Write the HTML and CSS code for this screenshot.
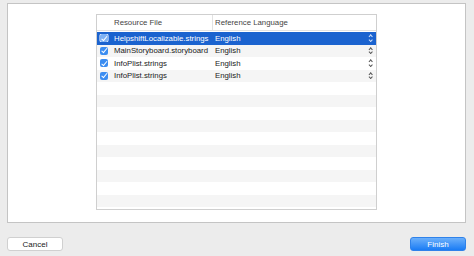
FILE: index.html
```html
<!DOCTYPE html>
<html lang="en">
<head>
  <meta charset="UTF-8">
  <title>Localization</title>
  <link rel="stylesheet" href="styles.css">
</head>
<body>
<div class="sheet">
  <div class="panel">
    <div class="files">
      <div class="files_head">
        <div class="cell"></div>
        <div class="cell">Resource File</div>
        <div class="cell col_lang">Reference Language</div>
      </div>
      <div class="files_body">
        <div class="row selected">
          <div class="cell"><span class="check"></span></div>
          <div class="cell">HelpshiftLocalizable.strings</div>
          <div class="cell col_lang">English<span class="updown"></span></div>
        </div>
        <div class="row">
          <div class="cell"><span class="check"></span></div>
          <div class="cell">MainStoryboard.storyboard</div>
          <div class="cell col_lang">English<span class="updown"></span></div>
        </div>
        <div class="row">
          <div class="cell"><span class="check"></span></div>
          <div class="cell">InfoPlist.strings</div>
          <div class="cell col_lang">English<span class="updown"></span></div>
        </div>
        <div class="row">
          <div class="cell"><span class="check"></span></div>
          <div class="cell">InfoPlist.strings</div>
          <div class="cell col_lang">English<span class="updown"></span></div>
        </div>
        <div class="row"></div>
        <div class="row"></div>
        <div class="row"></div>
        <div class="row"></div>
        <div class="row"></div>
        <div class="row"></div>
        <div class="row"></div>
        <div class="row"></div>
        <div class="row"></div>
        <div class="row"></div>
        <div class="row"></div>
      </div>
    </div>
  </div>
  <div class="actions">
    <button class="btn">Cancel</button>
    <button class="btn btn_default">Finish</button>
  </div>
</div>
</body>
</html>
```

FILE: styles.css
```css
body {
  margin: 0;
  background: #ececec;
  font-family: 'Liberation Sans', Arial, sans-serif;
  font-size: 7.8px;
  color: #222;
}

.sheet {
  width: 474px;
  height: 256px;
  box-sizing: border-box;
  padding: 3px 8px 0 7px;
}

.panel {
  height: 220px;
  box-sizing: border-box;
  background: #fff;
  border: 1px solid #c4c4c4;
  padding-top: 10px;
  padding-left: 88px;
}

.files {
  width: 281px;
  height: 196px;
  box-sizing: border-box;
  border: 1px solid #cfcfcf;
  overflow: hidden;
}

.files_head,
.row {
  display: grid;
  grid-template-columns: 15px 100px 1fr;
  align-items: center;
}

.files_head {
  height: 15px;
  border-bottom: 1px solid #e2e2e2;
  color: #444;
}

.files_head .col_lang {
  border-left: 1px solid #e2e2e2;
  padding-left: 2px;
  height: 15px;
  line-height: 15px;
}

.files_body {
  padding-top: 1px;
}

.row {
  height: 12.5px;
}

.row:nth-child(even) {
  background: #f5f5f5;
}

.cell {
  white-space: nowrap;
  overflow: hidden;
  padding-left: 2px;
}

.col_lang {
  display: flex;
  justify-content: space-between;
  align-items: center;
  padding-left: 3px;
  padding-right: 3px;
}

.row .cell:first-child {
  display: flex;
  align-items: center;
  padding-left: 3px;
}

.check {
  width: 8px;
  height: 8px;
  border-radius: 2px;
  background: #3b8df1;
  position: relative;
}

.check::after {
  content: '';
  position: absolute;
  left: 2.5px;
  top: 0.5px;
  width: 2px;
  height: 4.5px;
  border: solid #fff;
  border-width: 0 1.2px 1.2px 0;
  transform: rotate(40deg);
}

.updown {
  width: 5px;
  height: 8px;
  position: relative;
}

.updown::before,
.updown::after {
  content: '';
  position: absolute;
  left: 0.8px;
  width: 2.4px;
  height: 2.4px;
  border: solid #555;
  border-width: 1px 0 0 1px;
}

.updown::before {
  top: 1.2px;
  transform: rotate(45deg);
}

.updown::after {
  bottom: 1.2px;
  transform: rotate(225deg);
}

.row.selected {
  background: #1b63cf;
  color: #fff;
}

.row.selected .check {
  background: #7fb2f4;
  box-shadow: 0 0 0 0.5px #fff;
}

.row.selected .updown::before,
.row.selected .updown::after {
  border-color: #cfe0fa;
}

.actions {
  display: flex;
  justify-content: space-between;
  padding-top: 14px;
}

.btn {
  width: 56px;
  height: 14px;
  padding: 0;
  font-family: 'Liberation Sans', Arial, sans-serif;
  font-size: 8px;
  color: #222;
  background: #fff;
  border: 1px solid #d0d0d0;
  border-radius: 3px;
}

.btn_default {
  color: #fff;
  background: linear-gradient(#6cb0fb, #1a7cf5);
  border-color: #2f82ea;
}
```
